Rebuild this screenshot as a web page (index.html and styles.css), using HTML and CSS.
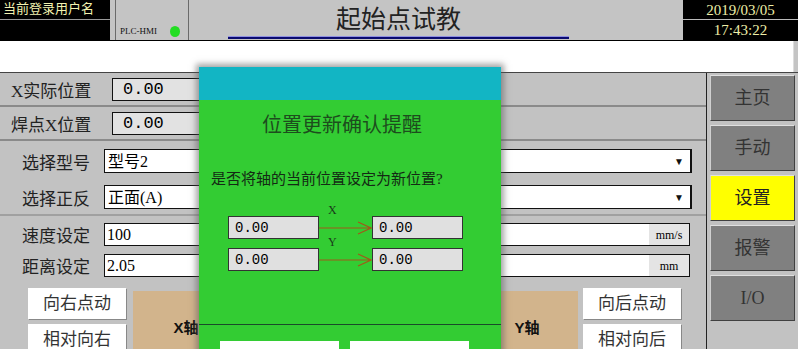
FILE: index.html
```html
<!DOCTYPE html>
<html lang="zh">
<head>
    <meta charset="UTF-8">
    <title>起始点试教</title>
    <link rel="stylesheet" href="styles.css">
</head>
<body>

<!-- Header -->
<div class="header">
    <div class="user-box">
        <div class="user-name">当前登录用户名</div>
        <div class="user-rest"></div>
    </div>
    <div class="plc-box">
        <span>PLC-HMI</span>
        <span class="plc-dot"></span>
    </div>
    <div class="title-area">
        <div class="title">起始点试教</div>
    </div>
    <div class="clock">
        <div class="clock-date">2019/03/05</div>
        <div class="clock-time">17:43:22</div>
    </div>
</div>

<div class="strip"></div>

<div class="main">
    <div class="panel">
        <div class="readout">
            <div class="readout-label">X实际位置</div>
            <div class="readout-value">0.00</div>
        </div>
        <div class="readout">
            <div class="readout-label">焊点X位置</div>
            <div class="readout-value">0.00</div>
        </div>

        <div class="selects">
            <div class="field-row">
                <div class="field-label">选择型号</div>
                <div class="select-box">型号2<span class="arrow">&#9660;</span></div>
            </div>
            <div class="field-row">
                <div class="field-label">选择正反</div>
                <div class="select-box">正面(A)<span class="arrow">&#9660;</span></div>
            </div>
        </div>

        <div class="inputs">
            <div class="field-row">
                <div class="field-label">速度设定</div>
                <div class="input-box"><span class="input-val">100</span><span class="unit">mm/s</span></div>
            </div>
            <div class="field-row">
                <div class="field-label">距离设定</div>
                <div class="input-box"><span class="input-val">2.05</span><span class="unit">mm</span></div>
            </div>
        </div>

        <div class="jog">
            <div class="jog-col">
                <div class="jog-btn">向右点动</div>
                <div class="jog-btn">相对向右</div>
            </div>
            <div class="axis axis-x">X轴</div>
            <div class="axis-gap"></div>
            <div class="axis axis-y">Y轴</div>
            <div class="jog-col">
                <div class="jog-btn">向后点动</div>
                <div class="jog-btn">相对向后</div>
            </div>
        </div>
    </div>

    <!-- Right navigation -->
    <div class="nav">
        <div class="nav-btn">主页</div>
        <div class="nav-btn">手动</div>
        <div class="nav-btn active">设置</div>
        <div class="nav-btn">报警</div>
        <div class="nav-btn">I/O</div>
    </div>
</div>

<!-- Confirm dialog -->
<div class="dialog">
    <div class="dialog-bar"></div>
    <div class="dialog-body">
        <div class="dialog-title">位置更新确认提醒</div>
        <div class="dialog-question">是否将轴的当前位置设定为新位置?</div>
        <div class="compare">
            <div class="cmp-box">0.00</div>
            <div class="cmp-arrow">
                <span class="cmp-axis">X</span>
                <svg width="53" height="14" viewBox="0 0 53 14"><path d="M0 7H52M39 1L52 7L39 13" fill="none" stroke="#a05a1a" stroke-width="1.2"/></svg>
            </div>
            <div class="cmp-box">0.00</div>
        </div>
        <div class="compare">
            <div class="cmp-box">0.00</div>
            <div class="cmp-arrow">
                <span class="cmp-axis">Y</span>
                <svg width="53" height="14" viewBox="0 0 53 14"><path d="M0 7H52M39 1L52 7L39 13" fill="none" stroke="#a05a1a" stroke-width="1.2"/></svg>
            </div>
            <div class="cmp-box">0.00</div>
        </div>
        <div class="dialog-sep"></div>
        <div class="dialog-buttons">
            <div class="dlg-btn"></div>
            <div class="dlg-btn"></div>
        </div>
    </div>
</div>

</body>
</html>
```

FILE: styles.css
```css
/* Basic Reset */
body, div {
    margin: 0;
    padding: 0;
}

body {
    width: 798px;
    height: 349px;
    overflow: hidden;
    background-color: #c4c4c4;
    font-family: 'Liberation Serif', 'Noto Sans CJK SC', serif;
    position: relative;
}

/* Header */
.header {
    display: flex;
    height: 40px;
    background-color: #c4c4c4;
    border-bottom: 1px solid #000;
}

.user-box {
    width: 110px;
    background-color: #000;
    display: flex;
    flex-direction: column;
}

.user-name {
    height: 19px;
    border-bottom: 1px solid #9a9a9a;
    color: #f2f2b0;
    font-size: 13px;
    line-height: 17px;
    padding-left: 3px;
}

.plc-box {
    width: 74px;
    margin-left: 5px;
    border-left: 1px solid #6a6a6a;
    border-right: 1px solid #6a6a6a;
    display: flex;
    align-items: flex-end;
    padding: 0 0 4px 4px;
    box-sizing: border-box;
    font-size: 9px;
    color: #111;
}

.plc-dot {
    width: 10px;
    height: 11px;
    border-radius: 50%;
    background-color: #22dd22;
    margin-left: 13px;
    margin-bottom: -1px;
}

.title-area {
    flex: 1;
    display: flex;
    justify-content: flex-start;
}

.title {
    margin-left: 39px;
    width: 341px;
    height: 37px;
    border-bottom: 2px solid #0a0a70;
    box-shadow: 0 -1px 0 #9090e0 inset;
    text-align: center;
    font-size: 25px;
    line-height: 40px;
    color: #222;
}

.clock {
    width: 115px;
    background-color: #000;
    color: #eeeea8;
    font-size: 15px;
    text-align: center;
}

.clock-date {
    height: 19px;
    line-height: 20px;
    border-bottom: 1px solid #bbb;
}

.clock-time {
    line-height: 21px;
}

.strip {
    height: 31px;
    background-color: #fff;
    margin-right: 4px;
    border-right: 1px solid #ddd;
}

/* Main area */
.main {
    display: flex;
    height: 277px;
    border-top: 1px solid #444;
}

.panel {
    width: 706px;
    border-right: 1px solid #222;
    background-color: #c2c2c2;
}

.readout {
    display: flex;
    align-items: center;
    height: 32px;
    border-bottom: 2px solid #8a8a8a;
}

.readout-label {
    width: 101px;
    padding-left: 11px;
    font-size: 17px;
    color: #222;
}

.readout-value {
    width: 200px;
    height: 21px;
    border: 1px solid #111;
    background-color: #e2e2e2;
    font-family: 'Liberation Mono', 'Noto Sans CJK SC', monospace;
    font-size: 17px;
    line-height: 21px;
    padding-left: 10px;
}

.selects {
    padding: 8px 0 5px 0;
    border-bottom: 2px solid #a0a0a0;
}

.inputs {
    padding: 7px 0 3px 0;
}

.field-row {
    display: flex;
    align-items: center;
    height: 24px;
    margin-bottom: 12px;
}

.selects .field-row:last-child {
    margin-bottom: 0;
}

.inputs .field-row {
    height: 23px;
    margin-bottom: 8px;
}

.field-label {
    width: 82px;
    padding-left: 22px;
    font-size: 17px;
    color: #222;
}

.select-box {
    width: 582px;
    height: 22px;
    border: 1px solid #111;
    border-right-width: 2px;
    background-color: #fff;
    font-size: 16px;
    line-height: 23px;
    padding-left: 3px;
    box-sizing: content-box;
    display: flex;
    justify-content: space-between;
}

.arrow {
    font-size: 10px;
    padding-right: 6px;
    color: #111;
}

.input-box {
    width: 584px;
    height: 21px;
    border: 1px solid #111;
    background-color: #fff;
    display: flex;
    justify-content: space-between;
}

.input-val {
    font-size: 16px;
    line-height: 22px;
    padding-left: 2px;
}

.unit {
    width: 40px;
    background-color: #e4e4e4;
    font-size: 12px;
    line-height: 22px;
    text-align: center;
}

/* Jog buttons */
.jog {
    display: flex;
    align-items: flex-start;
    padding-left: 28px;
}

.jog-col {
    display: flex;
    flex-direction: column;
    gap: 5px;
}

.jog-btn {
    width: 98px;
    height: 31px;
    background-color: #fff;
    box-shadow: 1px 1px 0 #888;
    text-align: center;
    font-size: 17px;
    line-height: 32px;
    color: #333;
}

.axis {
    height: 60px;
    margin-top: 3px;
    background-color: #d2b48c;
    font-family: 'Liberation Sans', 'Noto Sans CJK SC', sans-serif;
    font-weight: bold;
    font-size: 15px;
    color: #111;
    display: flex;
    align-items: center;
    justify-content: center;
    padding-top: 10px;
    box-sizing: border-box;
}

.axis-x {
    width: 100px;
    margin-left: 7px;
    padding-left: 6px;
}

.axis-gap {
    width: 246px;
}

.axis-y {
    width: 99px;
    margin-right: 5px;
    padding-right: 3px;
}

/* Navigation */
.nav {
    width: 91px;
    padding: 2px 3px 0 3px;
    box-sizing: border-box;
    background-color: #c2c2c2;
}

.nav-btn {
    height: 44px;
    margin-bottom: 4px;
    background-color: #808080;
    border-top: 1px solid #e0e0e0;
    border-left: 1px solid #d0d0d0;
    border-right: 1px solid #404040;
    border-bottom: 1px solid #404040;
    text-align: center;
    font-size: 18px;
    line-height: 44px;
    color: #333;
}

.nav-btn.active {
    background-color: #ffff00;
    color: #222;
}

/* Dialog */
.dialog {
    position: absolute;
    left: 199px;
    top: 67px;
    width: 302px;
    height: 290px;
    box-shadow: 0 0 6px 3px rgba(90, 90, 90, 0.55);
}

.dialog-bar {
    height: 33px;
    background-color: #12b5c4;
}

.dialog-body {
    height: 257px;
    background-color: #33cc33;
}

.dialog-title {
    text-align: center;
    padding-top: 12px;
    padding-right: 16px;
    font-size: 20px;
    line-height: 26px;
    color: #1d4d1d;
}

.dialog-question {
    padding: 31px 0 0 12px;
    font-size: 15px;
    line-height: 20px;
    color: #142a14;
}

.compare {
    display: flex;
    align-items: center;
    padding-left: 29px;
    margin-top: 27px;
}

.compare + .compare {
    margin-top: 9px;
}

.cmp-box {
    width: 83px;
    height: 21px;
    border: 1px solid #333;
    background-color: #e0e0e0;
    font-family: 'Liberation Mono', monospace;
    font-size: 14px;
    line-height: 22px;
    padding-left: 6px;
}

.cmp-arrow {
    width: 53px;
    height: 23px;
    position: relative;
    display: flex;
    align-items: center;
}

.cmp-axis {
    position: absolute;
    left: 9px;
    top: -13px;
    font-size: 12px;
    color: #1a3a1a;
}

.dialog-sep {
    margin-top: 53px;
    border-top: 1.5px solid #1a4a2a;
}

.dialog-buttons {
    display: flex;
    gap: 11px;
    padding: 16px 0 0 21px;
}

.dlg-btn {
    width: 119px;
    height: 30px;
    background-color: #fff;
}
```
